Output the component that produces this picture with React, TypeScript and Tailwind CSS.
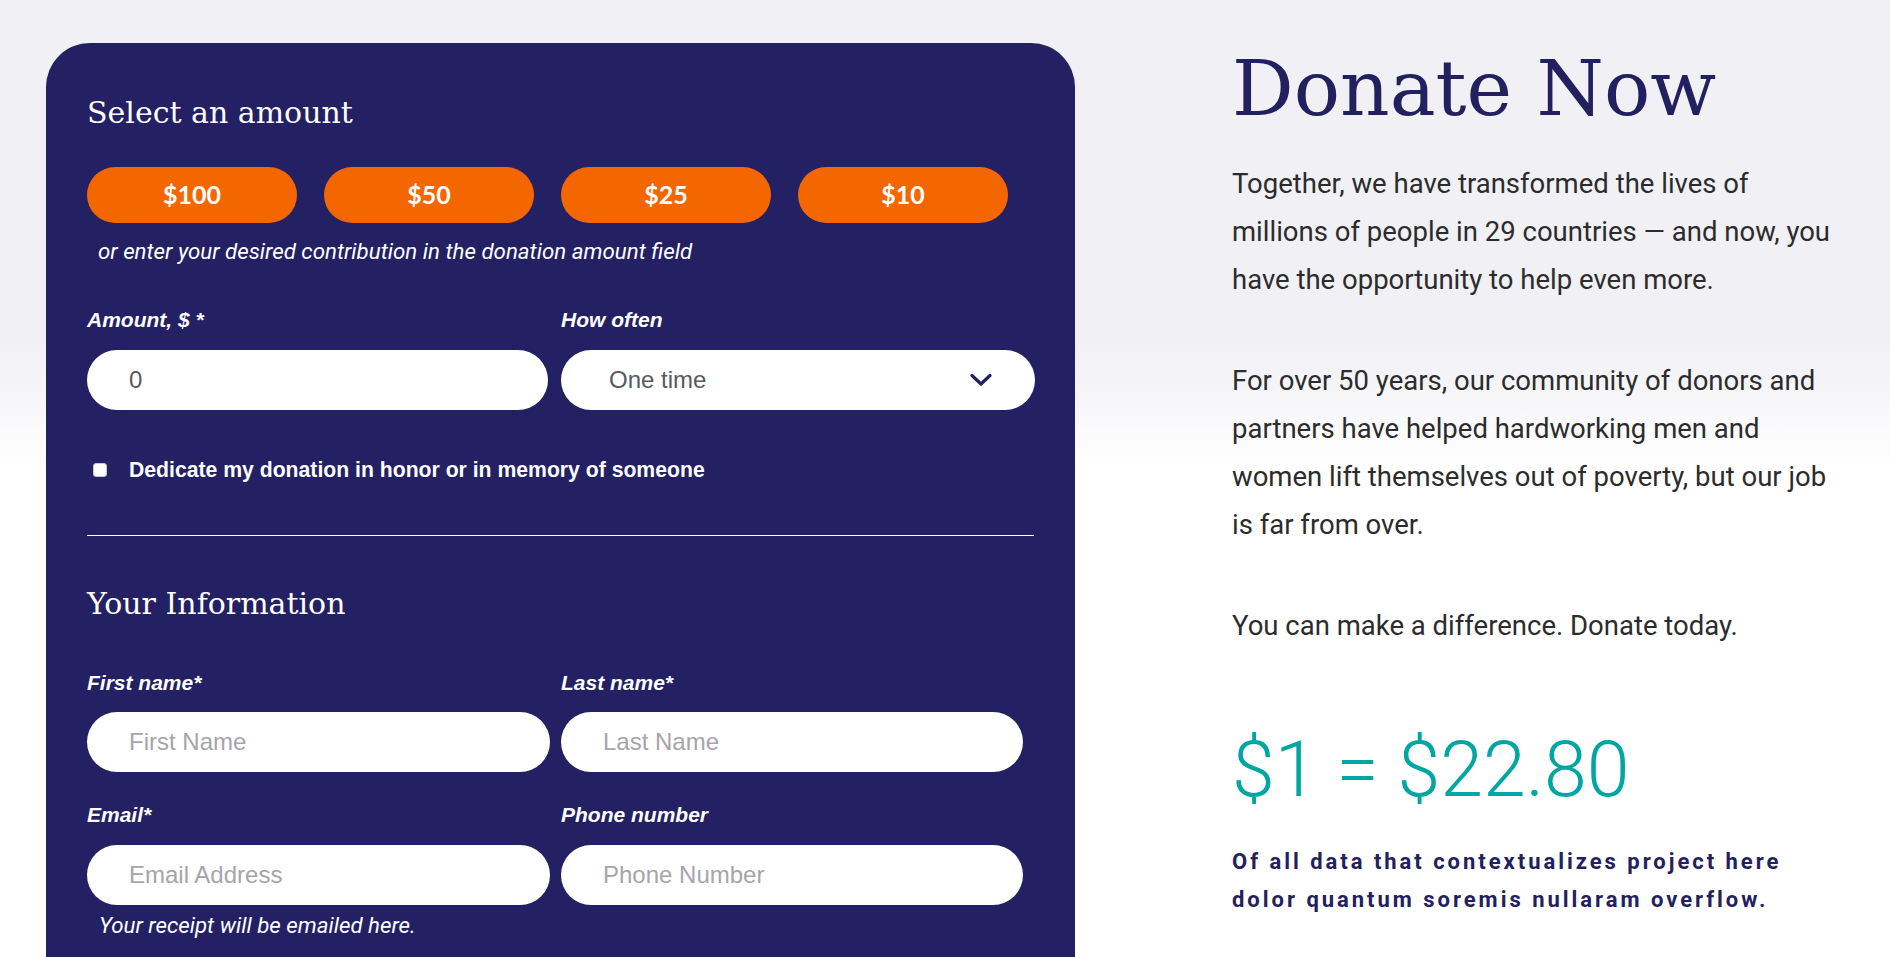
import React from "react";

// Donation page: form card on the left, pitch copy on the right.

const presets = ["$100", "$50", "$25", "$10"];

function Label({ children }: { children: React.ReactNode }) {
  return (
    <div className="font-['Liberation_Sans',Arial,sans-serif] text-[21px] leading-[24px] font-bold italic text-white">
      {children}
    </div>
  );
}

function TextInput({ placeholder, value }: { placeholder?: string; value?: string }) {
  return (
    <input
      type="text"
      defaultValue={value}
      placeholder={placeholder}
      className="h-[60px] w-full rounded-full bg-white pl-[42px] pr-6 font-['Liberation_Sans',Arial,sans-serif] text-[24px] text-[#555a63] placeholder:text-[#a5a5aa] outline-none"
    />
  );
}

export default function App() {
  return (
    <div className="h-[957px] overflow-hidden bg-[linear-gradient(180deg,#f0f0f5_0px,#f0f0f5_340px,#ffffff_470px)]">
      <div className="flex pl-[46px] pt-[43px]">
        {/* form card */}
        <form className="w-[1029px] h-[1100px] shrink-0 rounded-[44px] bg-[#232063] pl-[41px] pr-[40px] pt-[53px]">
          <h2 className="font-['DejaVu_Serif',serif] text-[30px] leading-[34px] text-white">
            Select an amount
          </h2>

          <div className="mt-[37px] flex gap-[27px]">
            {presets.map((p) => (
              <button
                key={p}
                type="button"
                className="h-[56px] w-[210px] rounded-full bg-[#f46600] font-['Lato',sans-serif] text-[25px] font-bold text-white"
              >
                {p}
              </button>
            ))}
          </div>

          <p className="mt-[16px] pl-[11px] font-['Roboto',sans-serif] text-[22.3px] leading-[24px] italic text-white">
            or enter your desired contribution in the donation amount field
          </p>

          <div className="mt-[45px] flex gap-[13px]">
            <div className="w-[461px]">
              <Label>Amount, $ *</Label>
              <div className="mt-[18px]">
                <TextInput value="0" />
              </div>
            </div>
            <div className="w-[474px]">
              <Label>How often</Label>
              <div className="mt-[18px] flex h-[60px] items-center justify-between rounded-full bg-white pl-[48px] pr-[43px]">
                <span className="font-['Liberation_Sans',Arial,sans-serif] text-[24px] text-[#555a63]">
                  One time
                </span>
                <svg width="22" height="14" viewBox="0 0 22 14" fill="none">
                  <polyline
                    points="2,2.5 11,11 20,2.5"
                    stroke="#232063"
                    strokeWidth="3.2"
                    strokeLinecap="round"
                    strokeLinejoin="round"
                  />
                </svg>
              </div>
            </div>
          </div>

          <label className="mt-[48px] flex items-center gap-[22px] pl-[6px]">
            <span className="h-[14px] w-[14px] rounded-[3px] border border-[#c8c8cc] bg-white" />
            <span className="font-['Liberation_Sans',Arial,sans-serif] text-[21.2px] leading-[24px] font-bold text-white">
              Dedicate my donation in honor or in memory of someone
            </span>
          </label>

          <div className="mt-[53px] h-px w-[947px] bg-white" />

          <h2 className="mt-[51px] font-['DejaVu_Serif',serif] text-[30px] leading-[34px] text-white">
            Your Information
          </h2>

          <div className="mt-[50px] grid grid-cols-[463px_462px] gap-x-[11px]">
            <div>
              <Label>First name*</Label>
              <div className="mt-[17px]">
                <TextInput placeholder="First Name" />
              </div>
            </div>
            <div>
              <Label>Last name*</Label>
              <div className="mt-[17px]">
                <TextInput placeholder="Last Name" />
              </div>
            </div>
            <div className="mt-[31px]">
              <Label>Email*</Label>
              <div className="mt-[18px]">
                <TextInput placeholder="Email Address" />
              </div>
              <p className="mt-[8px] pl-[12px] font-['Roboto',sans-serif] text-[22.3px] leading-[24px] italic text-white">
                Your receipt will be emailed here.
              </p>
            </div>
            <div className="mt-[31px]">
              <Label>Phone number</Label>
              <div className="mt-[18px]">
                <TextInput placeholder="Phone Number" />
              </div>
            </div>
          </div>
        </form>

        {/* pitch column */}
        <div className="ml-[157px] w-[608px] pt-[7px]">
          <h1 className="font-['DejaVu_Serif',serif] text-[77px] leading-[78px] text-[#23205f]">
            Donate Now
          </h1>
          <div className="mt-[32px] font-['Roboto',sans-serif] text-[27.5px] leading-[48px] text-[#2c2c2c]">
            <p className="mb-[53px]">
              Together, we have transformed the lives of millions of people in 29 countries — and now, you
              have the opportunity to help even more.
            </p>
            <p className="mb-[53px]">
              For over 50 years, our community of donors and partners have helped hardworking men and
              women lift themselves out of poverty, but our job is far from over.
            </p>
            <p>You can make a difference. Donate today.</p>
          </div>
          <div className="mt-[82px] font-['Roboto',sans-serif] text-[77px] leading-[77px] font-light text-[#00a6a1]">
            $1 = $22.80
          </div>
          <p className="mt-[34px] font-['Roboto',sans-serif] text-[22px] leading-[38px] font-bold tracking-[0.135em] text-[#23205f]">
            Of all data that contextualizes project here dolor quantum soremis nullaram overflow.
          </p>
        </div>
      </div>
    </div>
  );
}
